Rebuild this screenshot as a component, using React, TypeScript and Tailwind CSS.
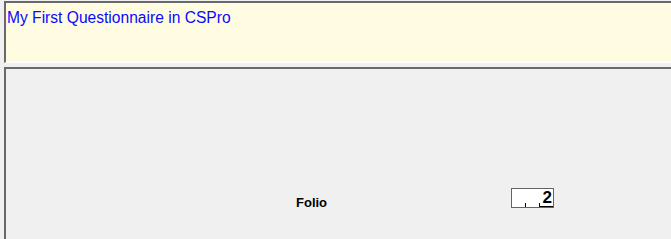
import React from "react";

export default function App() {
  return (
    <div className="w-[671px] h-[239px] overflow-hidden bg-[#f0f0f0] flex flex-col pl-[4px] pt-[1px]" style={{ fontFamily: '"Liberation Sans", Arial, sans-serif' }}>
      <div className="h-[62px] shrink-0 border-t-2 border-l-2 border-t-[#696969] border-l-[#696969] border-b border-b-[#ffffff] bg-[#fffce1] -mr-[10px] pl-[1px] pt-[3px]">
        <span className="text-[15.6px] leading-[18px] text-[#0a0aff]">My First Questionnaire in CSPro</span>
      </div>
      <div className="h-[4px] shrink-0" />
      <div className="relative flex-1 border-t-2 border-l-2 border-t-[#696969] border-l-[#696969] bg-[#f0f0f0] -mr-[10px]">
        <span className="absolute left-[290px] top-[126px] text-[13px] font-bold leading-[15px] text-black">Folio</span>
        <div className="absolute left-[505px] top-[119px] w-[43px] h-[20px] border border-[#646464] bg-white">
          <div className="absolute left-[13px] bottom-0 w-px h-[4px] bg-black" />
          <div className="absolute left-[27px] bottom-0 w-px h-[4px] bg-black" />
          <div className="absolute left-[28px] bottom-0 w-[13px] h-px bg-black" />
          <span className="absolute right-[1px] top-[0px] text-[17px] font-bold leading-[17px] text-black">2</span>
        </div>
      </div>
    </div>
  );
}
